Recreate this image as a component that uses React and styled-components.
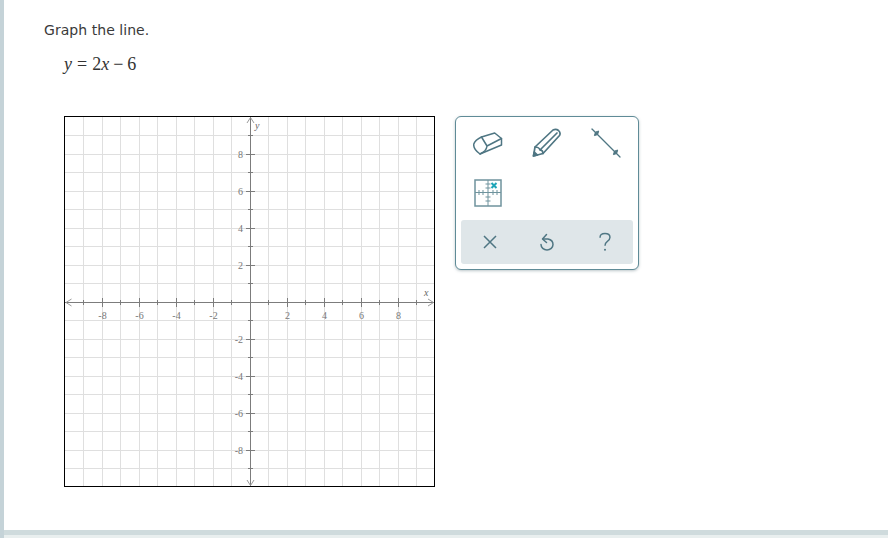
import React from "react";
import styled, { createGlobalStyle } from "styled-components";

const Global = createGlobalStyle`
  html, body { margin: 0; padding: 0; background: #fff; }
  body { font-family: "DejaVu Sans", Verdana, sans-serif; overflow: hidden; }
`;
const Page = styled.div`
  width: 888px; height: 538px; display: flex; flex-direction: column; box-sizing: border-box;
  border-left: 4px solid #c5d3d8; overflow: hidden;
`;
const Main = styled.main`
  height: 530px; flex: none; box-sizing: border-box; padding: 22px 0 0 40px;
`;
const Prompt = styled.p`
  margin: 0; font-size: 14px; line-height: 17px; color: #3a3a3a; letter-spacing: 0.05px;
`;
const Equation = styled.div`
  margin: 14px 0 0 20px; height: 22px; font: 18px/22px "Liberation Serif", "Times New Roman", serif;
  color: #333; display: flex; align-items: baseline;
`;
const Var = styled.i`font-style: italic;`;
const Op = styled.span`margin: 0 ${p => p.$gap}px;`;
const Workspace = styled.div`
  margin-top: 41px; margin-left: 20px; display: flex; align-items: flex-start; gap: 20px;
`;
const Graph = styled.svg`display: block; flex: none;`;
const Tools = styled.div`
  width: 184px; height: 154px; box-sizing: border-box; border: 1px solid #5f8b97; border-radius: 6px;
  background: #fff; box-shadow: 0 1px 3px rgba(60,90,100,.35); padding: 1px 5px 5px; display: flex; flex-direction: column;
`;
const ToolGrid = styled.div`
  display: grid; grid-template-columns: 54px 63px 55px; grid-auto-rows: 50px; height: 102px;
`;
const ToolCell = styled.div`display: flex; align-items: center; justify-content: center;`;
const Actions = styled.div`
  height: 44px; background: #dfe6e9; border-radius: 3px; display: grid; grid-template-columns: 57px 58px 57px; align-items: center;
`;
const Footer = styled.div`flex: 1; background: #e9efef; border-top: 5px solid #cfdbdd;`;

const IC = "#4f7683";
const Icon = styled.svg`display: block; flex: none; fill: none; stroke: ${IC}; stroke-width: 1.7; stroke-linejoin: round; stroke-linecap: round;`;

const W = 371, CX = 186.5, CY = 186.5, S = 18.5;
const steps = Array.from({ length: 19 }, (_, i) => i - 9);
const num = (n) => (n < 0 ? `-${-n}` : `${n}`);

function Plane() {
  return (
    <Graph width={W} height={W} viewBox={`0 0 ${W} ${W}`}>
      {steps.map(k => (
        <g key={k} stroke="#dfdfdf" strokeWidth="1">
          <line x1={Math.round(CX + k * S) - .5} x2={Math.round(CX + k * S) - .5} y1="0" y2={W} />
          <line y1={Math.round(CY + k * S) - .5} y2={Math.round(CY + k * S) - .5} x1="0" x2={W} />
        </g>
      ))}
      <g stroke="#7c7c7c" strokeWidth="1" fill="none">
        <line x1="1" x2={W - 1} y1="186.5" y2="186.5" />
        <line x1="186.5" x2="186.5" y1="1" y2={W - 1} />
        {steps.filter(k => k !== 0).map(k => {
          const x = Math.round(CX + k * S) - .5, y = Math.round(CY + k * S) - .5;
          const big = k % 2 === 0;
          return (
            <g key={k}>
              <line x1={x} x2={x} y1={big ? 182 : 184} y2={big ? 191 : 189} />
              <line y1={y} y2={y} x1={big ? 182 : 184} x2={big ? 191 : 189} />
            </g>
          );
        })}
      </g>
      <path d="M7.5 183 L2 186.5 L7.5 190 M364 183 L369.5 186.5 L364 190 M183 7 L186.5 1.5 L190 7 M183 364 L186.5 369.5 L190 364" stroke="#9a9a9a" fill="none" />
      <g fontFamily="'Liberation Serif', serif" fontSize="10" fill="#777" textAnchor="middle">
        {[-8, -6, -4, -2, 2, 4, 6, 8].map(n => (
          <text key={n} x={Math.round(CX + n * S) - .5} y="203">{num(n)}</text>
        ))}
      </g>
      <g fontFamily="'Liberation Serif', serif" fontSize="10" fill="#777" textAnchor="end">
        {[8, 6, 4, 2, -2, -4, -6, -8].map(n => (
          <text key={n} x="179" y={Math.round(CY - n * S) + 3}>{num(n)}</text>
        ))}
      </g>
      <g fontFamily="'Liberation Serif', serif" fontStyle="italic" fontSize="10" fill="#666">
        <text x="191" y="13">y</text>
        <text x="360" y="180">x</text>
      </g>
      <rect x=".5" y=".5" width={W - 1} height={W - 1} fill="none" stroke="#000" />
    </Graph>
  );
}

const Eraser = () => (
  <Icon width="30" height="23" viewBox="0 0 30 23" style={{ strokeWidth: 1.5 }}>
    <path d="M8.5 5 L21.7 1 L28.5 6.5 L28.5 13 L7 22 Q0 17 .8 12 Q2 8 8.5 5 Z" />
    <path d="M8.5 5 L14 14 L28.5 6.5 M14 14 Q13.5 19 7 22" />
  </Icon>
);
const Pencil = () => (
  <Icon width="30" height="30" viewBox="0 0 30 30">
    <path d="M1.5 28 L3 19 L21 2 Q24 .5 26.5 2.5 Q29 5 27.5 7.5 L11 25.5 Z" />
    <path d="M3 19 Q7 19 8 22 Q11 22 11 25.5 M8 22 L25 5" />
    <path d="M1.5 28 L2.3 24 L5.5 27 Z" fill={IC} />
  </Icon>
);
const LineTool = () => (
  <Icon width="32" height="32" viewBox="0 0 32 32" style={{ strokeWidth: 1.3 }}>
    <path d="M2 2 L30 30" />
    <path d="M8.6 4.4 L7.6 7.6 L4.4 8.6 L5.4 5.4 Z M27.6 23.4 L26.6 26.6 L23.4 27.6 L24.4 24.4 Z" fill={IC} strokeWidth="1" />
  </Icon>
);
const GridTool = () => (
  <svg width="28" height="28" viewBox="0 0 28 28" style={{ display: "block" }} fill="none">
    <rect x="1" y="1" width="26" height="26" stroke="#6f939d" strokeWidth="1.5" />
    <path d="M1 13.5 H27 M14 1 V27" stroke="#6f939d" strokeWidth="1" />
    <path d="M5 11 V16 M9 11 V16 M19 11 V16 M23 11 V16 M11.5 5 H16.5 M11.5 9 H16.5 M11.5 18 H16.5 M11.5 22 H16.5" stroke="#6f939d" strokeWidth="1" />
    <path d="M17.5 4 L22.5 9 M22.5 4 L17.5 9" stroke="#1fa5b8" strokeWidth="2" />
  </svg>
);
const CloseIcon = () => (
  <Icon width="14" height="14" viewBox="0 0 14 14" style={{ strokeWidth: 1.5, strokeLinecap: "butt" }}><path d="M1 1 L13 13 M13 1 L1 13" /></Icon>
);
const UndoIcon = () => (
  <Icon width="16" height="18" viewBox="0 0 16 18" style={{ strokeWidth: 1.5 }}>
    <path d="M4 6 H9 Q14 7 14 11.5 A6 5.5 0 0 1 2 11.5" /><path d="M7.5 1.5 L3.5 6 L7.5 9.5" />
  </Icon>
);
const HelpIcon = () => (
  <svg width="12" height="20" viewBox="0 0 14 22" style={{ display: "block" }} fill="none" stroke={IC} strokeWidth="1.7">
    <path d="M1.2 6 Q1.2 1 7 1 Q12.8 1 12.8 5.5 Q12.8 8.5 9.5 10.5 Q7 12 7 15.5" />
    <circle cx="7" cy="20" r="1.2" fill={IC} stroke="none" />
  </svg>
);

export default function App() {
  return (
    <Page>
      <Global />
      <Main>
        <Prompt>Graph the line.</Prompt>
        <Equation>
          <Var>y</Var><Op $gap={5}>=</Op><span>2</span><Var>x</Var><Op $gap={4}>−</Op><span>6</span>
        </Equation>
        <Workspace>
          <Plane />
          <Tools>
            <ToolGrid>
              <ToolCell><Eraser /></ToolCell>
              <ToolCell><Pencil /></ToolCell>
              <ToolCell><LineTool /></ToolCell>
              <ToolCell><GridTool /></ToolCell>
            </ToolGrid>
            <Actions>
              <ToolCell><CloseIcon /></ToolCell>
              <ToolCell><UndoIcon /></ToolCell>
              <ToolCell><HelpIcon /></ToolCell>
            </Actions>
          </Tools>
        </Workspace>
      </Main>
      <Footer />
    </Page>
  );
}
